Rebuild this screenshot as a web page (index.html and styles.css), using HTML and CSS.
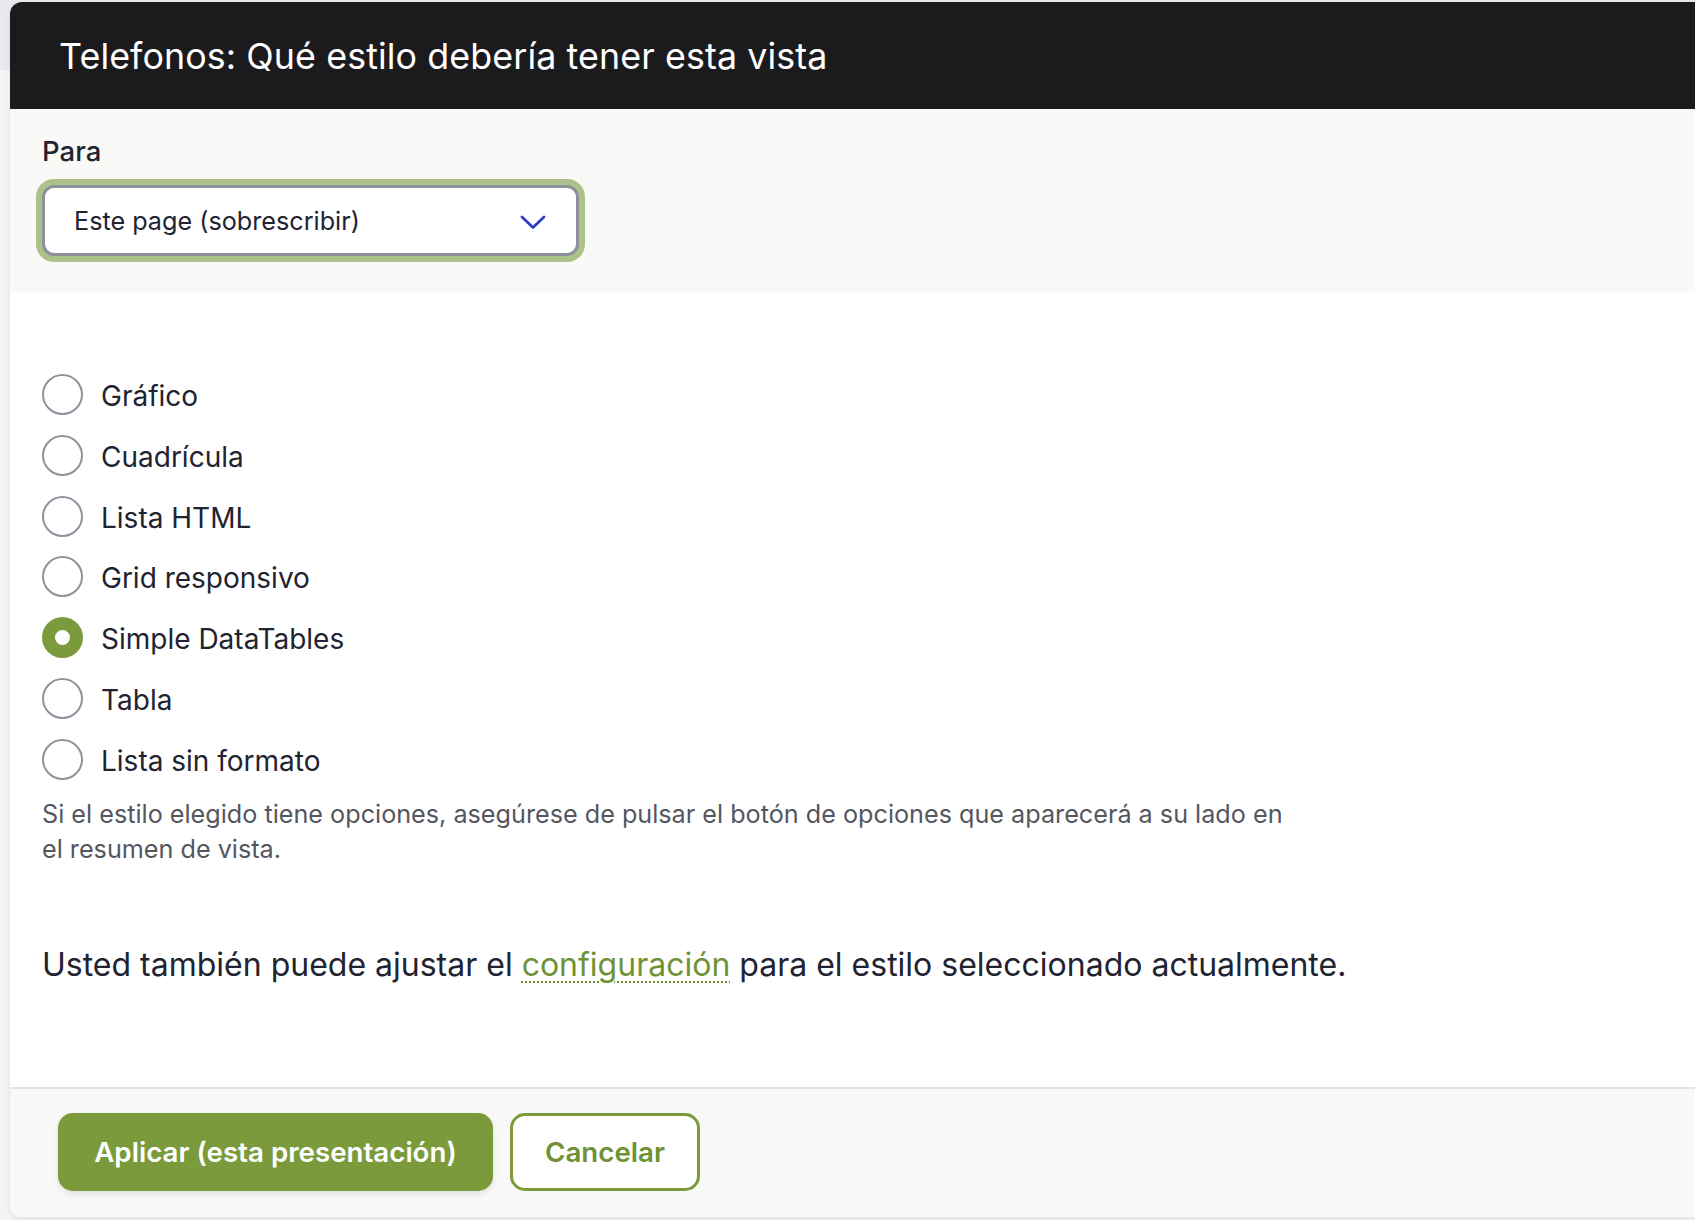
FILE: index.html
```html
<!DOCTYPE html>
<html lang="es">
<head>
<meta charset="utf-8">
<title>Telefonos: Qué estilo debería tener esta vista</title>
<link rel="stylesheet" href="styles.css">
</head>
<body>
<div class="backdrop">
  <div class="dialog">
    <div class="dialog-header">
      <h1 class="dialog-title">Telefonos: Qué estilo debería tener esta vista</h1>
    </div>
    <div class="dialog-top">
      <label class="field-label" for="for-select">Para</label>
      <div class="select">
        <span class="select-value">Este page (sobrescribir)</span>
        <svg class="select-chevron" width="26" height="15" viewBox="0 0 26 15" aria-hidden="true">
          <path d="M2 2 L13 12.5 L24 2" fill="none" stroke="#2f3dc9" stroke-width="2.8" stroke-linecap="round" stroke-linejoin="round"/>
        </svg>
      </div>
    </div>
    <div class="dialog-body">
      <div class="radios">
        <label class="radio"><span class="radio-dot"></span><span class="radio-label">Gráfico</span></label>
        <label class="radio"><span class="radio-dot"></span><span class="radio-label">Cuadrícula</span></label>
        <label class="radio"><span class="radio-dot"></span><span class="radio-label">Lista HTML</span></label>
        <label class="radio"><span class="radio-dot"></span><span class="radio-label">Grid responsivo</span></label>
        <label class="radio"><span class="radio-dot is-checked"></span><span class="radio-label">Simple DataTables</span></label>
        <label class="radio"><span class="radio-dot"></span><span class="radio-label">Tabla</span></label>
        <label class="radio"><span class="radio-dot"></span><span class="radio-label">Lista sin formato</span></label>
      </div>
      <p class="description">Si el estilo elegido tiene opciones, asegúrese de pulsar el botón de opciones que aparecerá a su lado en el resumen de vista.</p>
      <p class="note">Usted también puede ajustar el <a class="link" href="#">configuración</a> para el estilo seleccionado actualmente.</p>
    </div>
    <div class="dialog-footer">
      <button class="btn btn-primary" type="button">Aplicar (esta presentación)</button>
      <button class="btn btn-secondary" type="button">Cancelar</button>
    </div>
  </div>
</div>
</body>
</html>
```

FILE: styles.css
```css
html, body {
  margin: 0;
  padding: 0;
  overflow: hidden;
}

body {
  background: #f1f2f4;
  font-family: Inter, "Noto Sans", sans-serif;
  color: #222330;
}

.backdrop {
  padding-top: 2px;
  padding-left: 10px;
  background: linear-gradient(#e8e9ec 0, #e8e9ec 70px, #f3f4f6 70px);
  height: 1220px;
  box-sizing: border-box;
}

.dialog {
  width: 1720px;
  border-radius: 12px;
  overflow: hidden;
  background: #ffffff;
  box-shadow: 0 2px 6px rgba(0, 0, 0, 0.08);
}

.dialog-header {
  height: 107px;
  background: #1b1b1d;
  display: flex;
  align-items: center;
  padding-left: 49px;
}

.dialog-title {
  margin: 0;
  font-size: 35.8px;
  font-weight: 400;
  color: #ffffff;
  letter-spacing: 0.1px;
}

.dialog-top {
  background: #f9f9f7;
  padding: 26px 32px 31px;
  box-shadow: 0 3px 5px rgba(0, 0, 0, 0.05);
  position: relative;
}

.field-label {
  display: block;
  font-size: 27.5px;
  line-height: 32px;
  font-weight: 500;
  color: #222330;
  margin-bottom: 18px;
}

.select {
  width: 537px;
  height: 71px;
  box-sizing: border-box;
  border: 3px solid #8e919b;
  border-radius: 12px;
  background: #ffffff;
  box-shadow: 0 0 0 6px #adc28b;
  display: flex;
  align-items: center;
  justify-content: space-between;
  padding: 0 30px 0 29px;
}

.select-value {
  font-size: 25.2px;
  color: #222330;
}

.select-chevron {
  display: block;
  margin-top: 4px;
}

.dialog-body {
  padding: 77px 32px 0;
  height: 800px;
  box-sizing: border-box;
}

.radios {
  display: flex;
  flex-direction: column;
}

.radio {
  display: flex;
  align-items: center;
  height: 60.83px;
}

.radio-dot {
  width: 41px;
  height: 41px;
  box-sizing: border-box;
  border: 2px solid #8e929c;
  border-radius: 50%;
  background: #ffffff;
  flex: none;
  margin-right: 18px;
}

.radio-dot.is-checked {
  border: 13px solid #7a9a3c;
}

.radio-label {
  font-size: 28px;
  line-height: 34px;
  padding-top: 3px;
  color: #222330;
}

.description {
  margin: 7px 0 0;
  max-width: 1255px;
  font-size: 25.2px;
  line-height: 35px;
  color: #55575f;
}

.note {
  margin: 76px 0 0;
  font-size: 32px;
  line-height: 44px;
  color: #222330;
}

.link {
  color: #6f9236;
  text-decoration: underline dotted;
  text-decoration-thickness: 2px;
  text-underline-offset: 6px;
}

.dialog-footer {
  border-top: 2px solid #e4e4e4;
  background: #f9f9f7;
  padding: 24px 48px 26px;
  display: flex;
  gap: 17px;
}

.btn {
  height: 78px;
  border-radius: 15px;
  font-family: Inter, "Noto Sans", sans-serif;
  font-size: 27.7px;
  font-weight: 600;
  cursor: pointer;
}

.btn-primary {
  width: 435px;
  background: #7a9a3c;
  color: #ffffff;
  border: none;
  box-shadow: 0 3px 6px rgba(0, 0, 0, 0.1);
}

.btn-secondary {
  width: 190px;
  background: #ffffff;
  color: #6f9236;
  border: 3px solid #7a9a3c;
}
```
